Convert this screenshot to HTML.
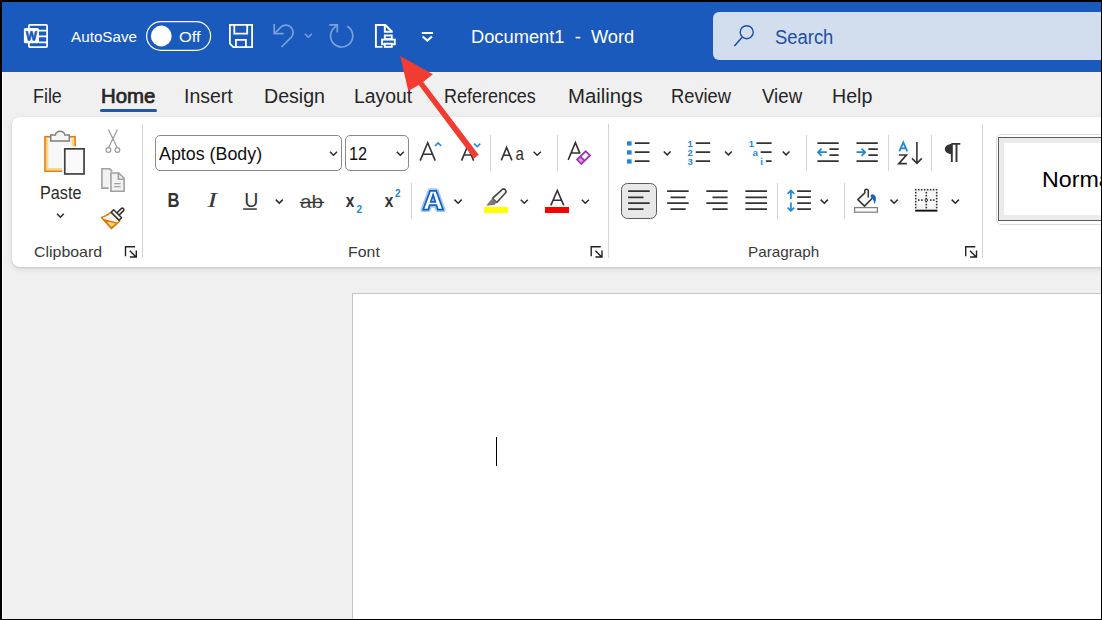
<!DOCTYPE html>
<html><head><meta charset="utf-8">
<style>
html,body{margin:0;padding:0;}
body{width:1102px;height:620px;position:relative;overflow:hidden;background:#000;font-family:"Liberation Sans",sans-serif;}
.a{position:absolute;}
.t{position:absolute;line-height:1;white-space:pre;transform-origin:0 0;}
#title{left:2px;top:2px;width:1099px;height:70px;background:#1b5abd;}
#tabs{left:2px;top:72px;width:1099px;height:547px;background:#f0f0f0;}
#wline{left:2px;top:72px;width:1px;height:547px;background:#fff;}
#panel{left:12px;top:117px;width:1100px;height:150px;background:#fff;border-radius:8px;box-shadow:0 1px 2px rgba(0,0,0,0.10),0 2px 6px rgba(0,0,0,0.10);}
#page{left:352px;top:293px;width:760px;height:400px;background:#fff;border:1px solid #c6c6c6;box-sizing:border-box;}
#search{left:713px;top:12px;width:400px;height:48px;background:#d2ddee;border-radius:6px;}
.tab{color:#262626;}
.sep{position:absolute;width:1px;background:#d6d6d6;}
svg{position:absolute;overflow:visible;}
</style></head><body>
<div id="title" class="a"></div>
<div id="tabs" class="a"></div>
<div id="wline" class="a"></div>
<div id="search" class="a"></div>


<!-- title icons -->
<svg class="a" style="left:0;top:0" width="1102" height="72" viewBox="0 0 1102 72">
 <g fill="none" stroke="#fff" stroke-width="1.8">
  <rect x="28.9" y="24.9" width="18.2" height="22.2" rx="1"/>
  <path d="M39 30.6H47M39 36.4H47M39 42.4H47"/>
 </g>
 <rect x="23.9" y="28" width="15.1" height="15.3" rx="1.6" fill="#fff"/>
 <path d="M25.9 31.3 L28.1 40.4 L30.1 40.4 L31.5 34.6 L32.9 40.4 L34.9 40.4 L37.1 31.3 L35.3 31.3 L33.9 37.6 L32.4 31.3 L30.6 31.3 L29.1 37.6 L27.7 31.3Z" fill="#1b5abd" stroke="#1b5abd" stroke-width="0.6" stroke-linejoin="round"/>
 <rect x="146.6" y="21.6" width="64" height="28.8" rx="14.4" fill="none" stroke="#fff" stroke-width="1.2"/>
 <circle cx="161.3" cy="36" r="10.4" fill="#fff"/>
 <g fill="none" stroke="#fff" stroke-width="1.8">
  <path d="M229.9 24.9H252.1V47.1H233.3L229.9 43.7Z"/>
  <path d="M234.3 25V33.6H247.2V25"/>
  <path d="M235.9 47V39.9H245.9V47"/>
 </g>
 <g fill="none" stroke="#7aa0da" stroke-width="1.7">
  <path d="M274.2 24V33.7H283.7"/>
  <path d="M274.8 33.3L280.84 27.14A7.3 7.3 0 0 1 291.16 37.46L281.5 47"/>
  <path d="M304.8 33.8L308.3 37.3L311.8 33.8" stroke-width="1.4"/>
  <path d="M347.2 26.3A11.1 11.1 0 1 1 334.7 27.3L337.3 24.9" stroke-width="1.7"/>
  <path d="M329.3 24.9H337.3V32.6"/>
 </g>
 <g fill="none" stroke="#fff" stroke-width="1.9">
  <path d="M382.5 46.9H375.9V25H385.3L391.8 31.5"/>
  <path d="M384.8 25V31.7H392.7"/>
  <rect x="384.85" y="35.45" width="6.9" height="3.6"/>
  <rect x="382.1" y="39.6" width="12.7" height="4.7"/>
  <rect x="384.85" y="43.7" width="6.9" height="3.2" fill="#1b5abd"/>
 </g>
 <g fill="none" stroke="#fff" stroke-width="2">
  <path d="M421.8 33H433"/>
  <path d="M422.6 36.4L427.3 40.6L432 36.4"/>
 </g>
 <g fill="none" stroke="#1d4f9f">
  <circle cx="746.7" cy="32.2" r="6.5" stroke-width="1.4"/>
  <path d="M742.2 37.3L734.4 46.1" stroke-width="1.5"/>
 </g>
</svg>

<!-- title texts -->
<span class="t" style="left:71.1px;top:28.9px;font-size:15.2px;color:#fff;transform:scaleX(1.0)">AutoSave</span>
<span class="t" style="left:179.3px;top:28.5px;font-size:15.2px;color:#fff;transform:scaleX(1.08)">Off</span>
<span class="t" style="left:471px;top:27.8px;font-size:18.3px;color:#fff;transform:scaleX(1.0)">Document1  -  Word</span>
<span class="t" style="left:774.9px;top:26.7px;font-size:20px;color:#1f4f9e;transform:scaleX(0.921)">Search</span>

<!-- tabs -->
<span class="t tab" style="left:32.8px;top:85.8px;font-size:20px;transform:scaleX(0.894)">File</span>
<span class="t tab" style="left:100.6px;top:86.3px;font-size:20px;-webkit-text-stroke:0.7px #262626;transform:scaleX(1.02)">Home</span>
<div class="a" style="left:100px;top:109px;width:57px;height:3px;border-radius:2px;background:#1e55b3"></div>
<span class="t tab" style="left:183.5px;top:86.3px;font-size:20px;transform:scaleX(0.975)">Insert</span>
<span class="t tab" style="left:263.9px;top:85.8px;font-size:20px;transform:scaleX(0.98)">Design</span>
<span class="t tab" style="left:354px;top:86.3px;font-size:20px;transform:scaleX(0.968)">Layout</span>
<span class="t tab" style="left:443.9px;top:85.8px;font-size:20px;transform:scaleX(0.898)">References</span>
<span class="t tab" style="left:567.7px;top:85.8px;font-size:20px;transform:scaleX(1.017)">Mailings</span>
<span class="t tab" style="left:670.9px;top:85.8px;font-size:20px;transform:scaleX(0.915)">Review</span>
<span class="t tab" style="left:761.8px;top:85.8px;font-size:20px;transform:scaleX(0.933)">View</span>
<span class="t tab" style="left:831.9px;top:85.8px;font-size:20px;transform:scaleX(0.98)">Help</span>

<div id="panel" class="a"></div>
<!-- ribbon icons -->
<svg class="a" style="left:0;top:0" width="1102" height="300" viewBox="0 0 1102 300">
 <!-- separators -->
 <g fill="#d3d3d3">
  <rect x="142" y="124" width="1" height="134"/>
  <rect x="608" y="124" width="1" height="134"/>
  <rect x="982" y="124" width="1" height="134"/>
  <rect x="490" y="135" width="1" height="36"/>
  <rect x="557" y="135" width="1" height="36"/>
  <rect x="411" y="183" width="1" height="36"/>
  <rect x="806" y="135" width="1" height="36"/>
  <rect x="888" y="135" width="1" height="36"/>
  <rect x="931" y="135" width="1" height="36"/>
  <rect x="777" y="183" width="1" height="36"/>
  <rect x="844" y="183" width="1" height="36"/>
 </g>
 <!-- paste clipboard -->
 <rect x="45.05" y="136.75" width="30" height="34.4" fill="#f7f7f7" stroke="#e67c0c" stroke-width="1.7"/>
 <path d="M47.1 138.5V169.1H73" fill="none" stroke="#f8d687" stroke-width="2.4"/>
 <path d="M72.9 138.5V146.6" fill="none" stroke="#f8d687" stroke-width="2.4"/>
 <rect x="62.2" y="146.4" width="24.4" height="30" fill="#fff"/>
 <path d="M50.7 135.1H55.3A4.9 4.9 0 0 1 64.9 135.1H69.3V141.1H50.7Z" fill="#f5f5f5" stroke="#7f7f7f" stroke-width="1.5"/>
 <rect x="64.75" y="148.85" width="19.3" height="25.1" fill="#fafafa" stroke="#3f3f3f" stroke-width="1.7"/>
 <!-- scissors -->
 <g fill="none" stroke="#9a9a9a" stroke-width="1.2">
  <path d="M108.4 129.6L117.2 147.4M117.4 129.6L108.6 147.4"/>
  <circle cx="108.4" cy="150" r="2.4"/>
  <circle cx="117.4" cy="150" r="2.4"/>
 </g>
 <!-- copy -->
 <g stroke="#a0a0a0" stroke-width="1.6" fill="#f2f2f2">
  <path d="M108.6 188.1H101.9V168.8H109.6L112.3 171.3" fill="#f2f2f2"/>
  <path d="M110.9 191.2V173H118.8L124.1 178.3V191.2Z"/>
  <path d="M118.4 173V179.2H124.1" fill="none"/>
  <path d="M114.2 183.6H120.7M114.2 186.6H120.7" fill="none" stroke-width="1.4"/>
 </g>
 <!-- format painter -->
 <path d="M111 212.4C107.5 215.3 104.5 216.6 101.6 217.4L111.3 228.6L119.7 221.2Z" fill="#f7f7f7" stroke="#e07b00" stroke-width="1.5" stroke-linejoin="round"/>
 <path d="M103.6 219.8L117.2 223.2L111.4 227.8Z" fill="#f8d688" stroke="#e07b00" stroke-width="1.4" stroke-linejoin="round"/>
 <g fill="#f7f7f7" stroke="#333" stroke-width="1.5" stroke-linejoin="round">
  <path d="M116.6 213.2L121.4 208.4A1.6 1.6 0 0 1 123.6 210.6L118.8 215.4Z"/>
  <path d="M111.2 212.2L113.6 209.8L121.6 217.8L119.2 220.2Z"/>
 </g>
</svg>

<!-- font group -->
<svg class="a" style="left:0;top:0" width="1102" height="300" viewBox="0 0 1102 300">
 <rect x="155.5" y="135.5" width="186" height="35" rx="4.5" fill="#fff" stroke="#8a8a8a" stroke-width="1"/>
 <rect x="345.5" y="135.5" width="63" height="35" rx="4.5" fill="#fff" stroke="#8a8a8a" stroke-width="1"/>
 <g fill="none" stroke="#2b2b2b" stroke-width="1.5">
  <path d="M330 151.8L333.5 155.3L337 151.8"/>
  <path d="M396.8 151.8L400.3 155.3L403.8 151.8"/>
  <path d="M533.6 151.7L537.2 155.2L540.8 151.7"/>
  <path d="M275.8 199.6L279.3 203.1L282.8 199.6"/>
  <path d="M454.5 199.6L458.1 203.2L461.7 199.6"/>
  <path d="M520.8 199.8L524.3 203.3L527.8 199.8"/>
  <path d="M581.8 199.8L585.3 203.3L588.8 199.8"/>
  <path d="M663.8 151.5L667.2 154.9L670.6 151.5"/>
  <path d="M725 151.5L728.4 154.9L731.8 151.5"/>
  <path d="M782.7 151.5L786.1 154.9L789.5 151.5"/>
  <path d="M820.7 199.6L824.3 203.2L827.9 199.6"/>
  <path d="M890.5 199.6L894.1 203.2L897.7 199.6"/>
  <path d="M951.7 199.6L955.3 203.2L958.9 199.6"/>
  <path d="M57 213.8L60.4 217.2L63.8 213.8"/>
 </g>
 <!-- grow / shrink -->
 <g fill="none" stroke="#333" stroke-width="1.6">
  <path d="M420.2 160.6L427.7 142.8L435.2 160.6M422.8 154.2H432.6"/>
  <path d="M461.6 160.6L467.6 146L473.6 160.6M463.8 155H471.4"/>
  <path d="M501.3 160.4L506.6 147.4L511.9 160.4M503.3 155.3H509.9"/>
  <path d="M568.2 159.9L575.4 142.6L579.6 152.6M570.4 153H580.5"/>
 </g>
 <text x="515.6" y="160.1" font-family="Liberation Sans" font-size="19" fill="#333" textLength="8.4" lengthAdjust="spacingAndGlyphs">a</text>
 <g fill="none" stroke="#1e88d8" stroke-width="1.6">
  <path d="M435 146L438.1 142.9L441.2 146"/>
  <path d="M474.1 143.6L477.2 146.7L480.3 143.6"/>
 </g>
 <!-- eraser -->
 <path d="M577.3 159.5L580.3 156.6L584.5 160.8L581.3 163.8Z" fill="#dc98e8"/>
 <g fill="none" stroke="#a032b8" stroke-width="1.5" stroke-linejoin="miter">
  <path d="M585.7 151.3L590 155.5L581.3 163.9L577.1 159.6Z" fill="#f8f8f8"/>
  <path d="M580.3 156.6L584.5 160.8"/>
 </g>
 <path d="M577.3 159.5L580.3 156.6L584.5 160.8L581.3 163.8Z" fill="#dc98e8"/>
 <path d="M585.7 151.3L590 155.5L581.3 163.9L577.1 159.6ZM580.3 156.6L584.5 160.8" fill="none" stroke="#a032b8" stroke-width="1.5"/>
 <!-- B I U -->
 <text x="167.6" y="206.8" font-family="Liberation Sans" font-weight="bold" font-size="19.5" fill="#333" textLength="12" lengthAdjust="spacingAndGlyphs">B</text>
 <text x="207.2" y="206.8" font-family="Liberation Serif" font-style="italic" font-size="21" fill="#3a3a3a" textLength="9.8" lengthAdjust="spacingAndGlyphs">I</text>
 <text x="244.3" y="206.6" font-family="Liberation Sans" font-size="19.5" fill="#333">U</text>
 <rect x="243.2" y="208.3" width="13.6" height="1.5" fill="#333"/>
 <!-- strikethrough -->
 <text x="300" y="208.2" font-family="Liberation Sans" font-size="18" fill="#444" textLength="23" lengthAdjust="spacingAndGlyphs">ab</text>
 <rect x="299.8" y="201.8" width="24.4" height="1.3" fill="#333"/>
 <!-- sub/sup -->
 <text x="345.8" y="206.8" font-family="Liberation Sans" font-weight="bold" font-size="17.5" fill="#333" textLength="8.6" lengthAdjust="spacingAndGlyphs">x</text>
 <text x="356.4" y="212.6" font-family="Liberation Sans" font-weight="bold" font-size="10" fill="#1e88d8">2</text>
 <text x="384.7" y="206.8" font-family="Liberation Sans" font-weight="bold" font-size="17.5" fill="#333" textLength="8.6" lengthAdjust="spacingAndGlyphs">x</text>
 <text x="395" y="196.6" font-family="Liberation Sans" font-weight="bold" font-size="10" fill="#1e88d8">2</text>
 <!-- text effects A -->
 <path transform="translate(433 200.2) scale(0.91) translate(-433 -200.5)" d="M429.8 190.2H436.5L444 210.8H438.3L436.8 206H429.4L427.9 210.8H422.2ZM433.1 194.5L435.6 202.3H430.6Z" fill="#fff" stroke="#9ccaf2" stroke-width="5.6" stroke-linejoin="round" fill-rule="evenodd"/>
 <path transform="translate(433 200.2) scale(0.91) translate(-433 -200.5)" d="M429.8 190.2H436.5L444 210.8H438.3L436.8 206H429.4L427.9 210.8H422.2ZM433.1 194.5L435.6 202.3H430.6Z" fill="#fff" stroke="#1560c0" stroke-width="1.9" stroke-linejoin="miter" fill-rule="evenodd"/>
 <!-- highlighter -->
 <rect x="484" y="207" width="24" height="6" fill="#ffff00"/>
 <g stroke="#444" stroke-width="1.6" stroke-linejoin="round">
  <path d="M492.5 198.3L501.8 189.8A2.4 2.4 0 0 1 505.2 193.2L496.7 202.5Z" fill="#f6f6f6"/>
 </g>
 <path d="M492.5 198.3L496.7 202.5L494.3 204.9L488.2 205.6L486.2 205.6L490.4 200.4Z" fill="#7a7a7a"/>
 <!-- font color -->
 <rect x="545" y="207" width="24" height="6" fill="#ff0000"/>
 <path d="M550.8 205.4L557.3 190.4L563.8 205.4M553 200.2H561.6" fill="none" stroke="#333" stroke-width="1.6"/>
</svg>

<!-- paragraph group -->
<svg class="a" style="left:0;top:0" width="1102" height="300" viewBox="0 0 1102 300">
 <!-- bullets -->
 <g fill="#1e88d8">
  <rect x="627" y="141.3" width="4.6" height="4.3"/>
  <rect x="627" y="150.3" width="4.6" height="4.3"/>
  <rect x="627" y="159.3" width="4.6" height="4.3"/>
 </g>
 <g fill="none" stroke="#333" stroke-width="1.7">
  <path d="M634.8 143.2H649.5M634.8 152.2H649.5M634.8 161.2H649.5"/>
  <path d="M695.7 143.2H710.2M695.7 152.2H710.2M695.7 161.2H710.2"/>
  <path d="M756.4 143.2H771.6M760.7 152.2H771.6M765.9 161.2H771.6"/>
 </g>
 <g font-family="Liberation Sans" font-weight="bold" fill="#1e88d8">
  <text x="687.6" y="146.8" font-size="9.5">1</text>
  <text x="687.6" y="155.8" font-size="9.5">2</text>
  <text x="687.6" y="164.8" font-size="9.5">3</text>
  <text x="748.8" y="146.8" font-size="9.5">1</text>
  <text x="752.6" y="156" font-size="9.8">a</text>
  <text x="760.2" y="164.8" font-size="9.5">i</text>
 </g>
 <!-- indent -->
 <g fill="none" stroke="#333" stroke-width="1.7">
  <path d="M817.4 143.1H838.7M829.5 149.1H838.7M829.5 155.2H838.7M817.4 161.2H838.7"/>
  <path d="M856.5 143.1H877.8M868.4 149.1H877.8M868.4 155.2H877.8M856.5 161.2H877.8"/>
 </g>
 <g fill="none" stroke="#1e88d8" stroke-width="1.7">
  <path d="M818.2 152.2H826.9M821.6 148.6L818 152.2L821.6 155.8"/>
  <path d="M856.5 152.2H865M861.6 148.6L865.2 152.2L861.6 155.8"/>
 </g>
 <!-- sort -->
 <path d="M899.3 151.4L903.3 142.4L907.3 151.4M900.6 148.3H906" fill="none" stroke="#1e88d8" stroke-width="1.8"/>
 <path d="M898.8 155H906.4L898.8 163.7H906.8" fill="none" stroke="#333" stroke-width="1.7"/>
 <path d="M916.9 142V163.4M912 158.4L916.9 163.4L921.8 158.4" fill="none" stroke="#333" stroke-width="1.6"/>
 <!-- pilcrow -->
 <path d="M951.3 143.9H960.3M951.8 144V161.9M956.5 144V161.9" fill="none" stroke="#333" stroke-width="1.9"/>
 <path d="M952.2 143.9C947.6 143.9 944.9 146.1 944.9 149.1C944.9 152.1 947.6 154.3 952.2 154.3Z" fill="#333"/>
 <!-- alignment -->
 <rect x="621.5" y="183.5" width="35" height="35" rx="6" fill="#e8e8e8" stroke="#5a5a5a" stroke-width="1"/>
 <g fill="none" stroke="#333" stroke-width="1.7">
  <path d="M628.1 191.2H649.7M628.1 197.3H643.5M628.1 203.1H649.7M628.1 209.2H643.5"/>
  <path d="M667.1 191.2H688.7M670.5 197.3H685.7M667.1 203.1H688.7M670.5 209.2H685.7"/>
  <path d="M706.3 191.2H727.6M712.5 197.3H727.6M706.3 203.1H727.6M712.5 209.2H727.6"/>
  <path d="M745.4 191.2H767M745.4 197.3H767M745.4 203.1H767M745.4 209.2H767"/>
  <path d="M797.2 191.1H810.9M797.2 197.1H810.9M797.2 203.1H810.9M797.2 209.2H810.9"/>
 </g>
 <g fill="none" stroke="#1e88d8" stroke-width="1.7">
  <path d="M790.9 190.6V199M787.6 193.8L790.9 190.5L794.2 193.8"/>
  <path d="M790.9 202.4V210.8M787.6 207.6L790.9 210.9L794.2 207.6"/>
 </g>
 <!-- shading -->
 <rect x="854.6" y="207.6" width="22.8" height="4.6" fill="#fafafa" stroke="#808080" stroke-width="1.2"/>
 <path d="M868.3 197.4V191A1.75 1.75 0 0 0 864.8 191V192.9L857.8 199.6L864.5 206.1L872.3 198.3" fill="#f7f7f7" stroke="#333" stroke-width="1.5" stroke-linejoin="round"/>
 <path d="M870.6 195.8C871.3 193.4 874.6 193.9 875.6 196.8C876.3 199 875.7 201.8 874.4 204.2C874 201.3 873.2 198.9 871.2 197.7Z" fill="#1565c0"/>
 <!-- borders -->
 <rect x="916" y="190" width="20.5" height="20" fill="#f8f8f8"/>
 <g fill="#333"><rect x="914.90" y="188.90" width="1.6" height="1.6"/><rect x="917.88" y="188.90" width="1.6" height="1.6"/><rect x="920.86" y="188.90" width="1.6" height="1.6"/><rect x="923.84" y="188.90" width="1.6" height="1.6"/><rect x="926.82" y="188.90" width="1.6" height="1.6"/><rect x="929.80" y="188.90" width="1.6" height="1.6"/><rect x="932.78" y="188.90" width="1.6" height="1.6"/><rect x="935.76" y="188.90" width="1.6" height="1.6"/><rect x="914.90" y="191.88" width="1.6" height="1.6"/><rect x="935.90" y="191.88" width="1.6" height="1.6"/><rect x="914.90" y="194.86" width="1.6" height="1.6"/><rect x="935.90" y="194.86" width="1.6" height="1.6"/><rect x="914.90" y="197.84" width="1.6" height="1.6"/><rect x="935.90" y="197.84" width="1.6" height="1.6"/><rect x="914.90" y="200.82" width="1.6" height="1.6"/><rect x="935.90" y="200.82" width="1.6" height="1.6"/><rect x="914.90" y="203.80" width="1.6" height="1.6"/><rect x="935.90" y="203.80" width="1.6" height="1.6"/><rect x="914.90" y="206.78" width="1.6" height="1.6"/><rect x="935.90" y="206.78" width="1.6" height="1.6"/><rect x="925.50" y="191.88" width="1.6" height="1.6"/><rect x="925.50" y="194.86" width="1.6" height="1.6"/><rect x="925.50" y="197.84" width="1.6" height="1.6"/><rect x="925.50" y="200.82" width="1.6" height="1.6"/><rect x="925.50" y="203.80" width="1.6" height="1.6"/><rect x="925.50" y="206.78" width="1.6" height="1.6"/><rect x="918.00" y="199.30" width="1.6" height="1.6"/><rect x="921.00" y="199.30" width="1.6" height="1.6"/><rect x="929.90" y="199.30" width="1.6" height="1.6"/><rect x="932.90" y="199.30" width="1.6" height="1.6"/></g>
 <rect x="915.2" y="209.7" width="22.2" height="1.9" fill="#111"/>
 <circle cx="926.3" cy="200.1" r="1.3" fill="none" stroke="#333" stroke-width="0.9"/>
</svg>

<!-- labels -->
<span class="t" style="left:40.1px;top:184.8px;font-size:17.5px;color:#2b2b2b;transform:scaleX(0.926)">Paste</span>
<span class="t" style="left:33.9px;top:244.1px;font-size:15px;color:#3a3a3a;transform:scaleX(1.06)">Clipboard</span>
<span class="t" style="left:347.7px;top:244.2px;font-size:15px;color:#3a3a3a;transform:scaleX(1.06)">Font</span>
<span class="t" style="left:747.9px;top:244.1px;font-size:15px;color:#3a3a3a;transform:scaleX(1.018)">Paragraph</span>
<span class="t" style="left:158.5px;top:144px;font-size:19px;color:#111;transform:scaleX(0.939)">Aptos (Body)</span>
<span class="t" style="left:349.1px;top:144.3px;font-size:19px;color:#111;transform:scaleX(0.86)">12</span>
<div class="a" style="left:996px;top:134px;width:120px;height:91px;box-sizing:border-box;border:1px solid #dcdcdc;border-radius:5px;background:#fff"></div>
<div class="a" style="left:998px;top:137px;width:120px;height:84px;box-sizing:border-box;border:1px solid #5b5b5b;background:#ebebeb"></div>
<div class="a" style="left:1004px;top:143px;width:110px;height:72px;background:#fff"></div>
<span class="t" style="left:1041.8px;top:169.8px;font-size:21.5px;color:#000;transform:scaleX(1.08)">Normal</span>
<svg class="a" style="left:0;top:0" width="1102" height="300" viewBox="0 0 1102 300">
 <g id="launch" fill="none" stroke="#222" stroke-width="1.4">
  <path d="M125.5 256.3V246.7H135.1M129.8 250.8L136 257M136.3 250.5V257H129.8"/>
 </g>
 <use href="#launch" x="465.7" y="0"/>
 <use href="#launch" x="840.2" y="0"/>
</svg>

<div id="page" class="a"></div>
<div class="a" style="left:496px;top:437px;width:1.4px;height:29px;background:#000"></div>

<!-- annotation arrow -->
<svg class="a" style="left:0;top:0" width="1102" height="620" viewBox="0 0 1102 620">
 <path d="M400.2 56L432.9 74.2L423.2 81.9L478.7 154.8L473.9 158.4L418.8 85.1L408.3 91.1Z" fill="#f23c31"/>
</svg>
<!-- frame -->
<div class="a" style="left:0;top:0;width:1102px;height:2px;background:#000"></div>
<div class="a" style="left:0;top:0;width:2px;height:620px;background:#000"></div>
<div class="a" style="left:1101px;top:0;width:1px;height:620px;background:#000"></div>
<div class="a" style="left:0;top:619px;width:1102px;height:1px;background:#000"></div>

</body></html>
